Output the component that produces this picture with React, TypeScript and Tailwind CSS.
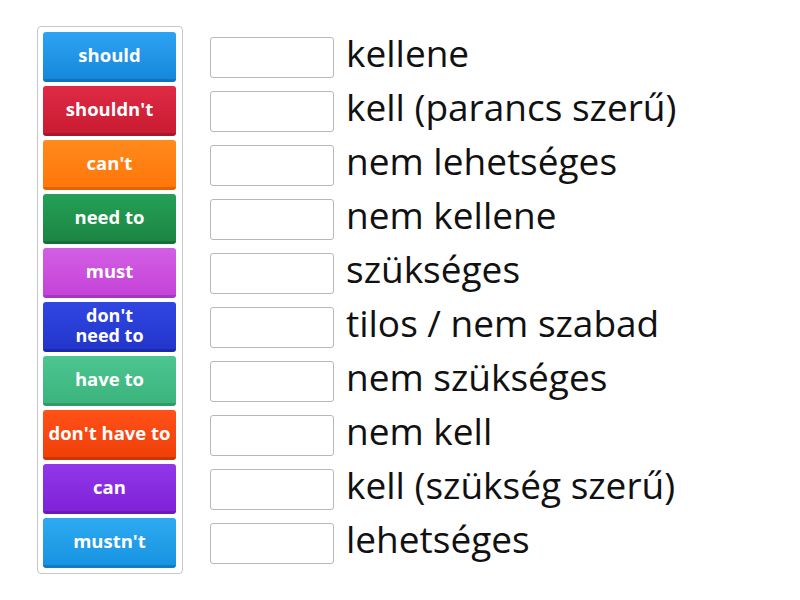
const tiles = [
  { label: "should", color: "from-[#2ea3f2] to-[#1688dc] border-[#1273bd]" },
  { label: "shouldn't", color: "from-[#e02a45] to-[#c91b32] border-[#a9152a]" },
  { label: "can't", color: "from-[#ff8a1c] to-[#ff7608] border-[#e06406]" },
  { label: "need to", color: "from-[#24a055] to-[#1c8644] border-[#166e37]" },
  { label: "must", color: "from-[#d35ee4] to-[#c443d8] border-[#a836bb]" },
  { label: "don't need to", color: "from-[#3146e0] to-[#2236cc] border-[#1a2aa8]" },
  { label: "have to", color: "from-[#4cc590] to-[#3cb47e] border-[#2f9a6a]" },
  { label: "don't have to", color: "from-[#ff5018] to-[#f04008] border-[#cc3406]" },
  { label: "can", color: "from-[#9236ea] to-[#7f22d8] border-[#6a1ab8]" },
  { label: "mustn't", color: "from-[#2eaaf0] to-[#1694e2] border-[#127cc0]" },
];

const targets = [
  "kellene",
  "kell (parancs szerű)",
  "nem lehetséges",
  "nem kellene",
  "szükséges",
  "tilos / nem szabad",
  "nem szükséges",
  "nem kell",
  "kell (szükség szerű)",
  "lehetséges",
];

export default function App() {
  return (
    <div className="w-[800px] h-[600px] bg-white font-['Open_Sans',sans-serif]">
      <div className="flex items-start pt-[26px] pl-[37px]">
        {/* Tile tray */}
        <div className="w-[146px] border border-[#c8c8c8] rounded-[4px] px-[5px] py-[5px] flex flex-col gap-[4px]">
          {tiles.map((t) => (
            <div
              key={t.label}
              className={`h-[50px] w-[133px] rounded-[3px] bg-gradient-to-b ${t.color} border-b-[3px] flex items-center justify-center text-center text-white font-bold text-[18.5px] leading-[20px] pb-[1px]`}
            >
              {t.label === "don't need to" ? (
                <span className="flex flex-col leading-[20px] text-[18px]">
                  <span>don't</span>
                  <span>need to</span>
                </span>
              ) : (
                t.label
              )}
            </div>
          ))}
        </div>

        {/* Answer rows */}
        <div className="ml-[27px] pt-[6px] flex flex-col gap-[4px]">
          {targets.map((txt) => (
            <div key={txt} className="h-[50px] flex items-center">
              <div className="w-[124px] h-[41px] border border-[#b8b8b8] rounded-[3px] bg-white" />
              <span className="ml-[12px] text-[37px] leading-none text-[#111] mt-[-10px]">{txt}</span>
            </div>
          ))}
        </div>
      </div>
    </div>
  );
}
